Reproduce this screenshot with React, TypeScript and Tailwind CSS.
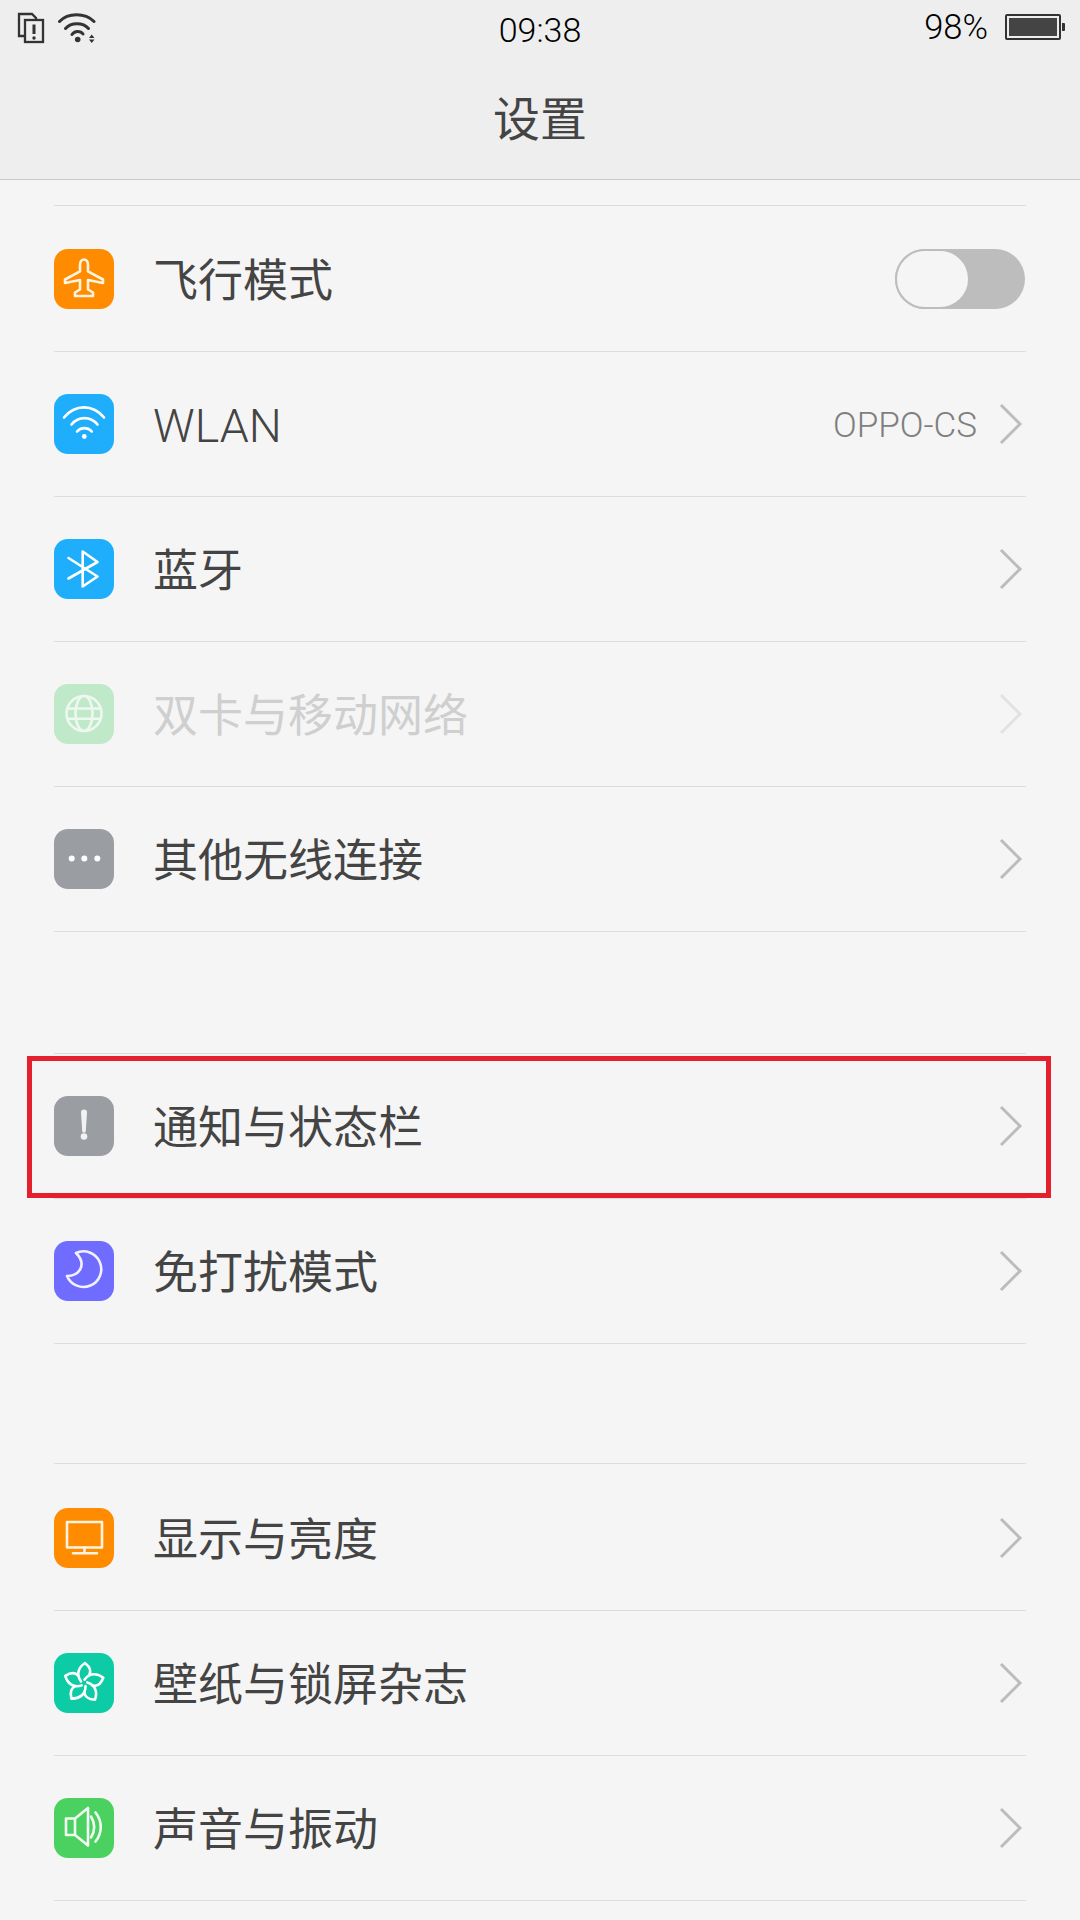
import React from "react";

const iconStroke = {
  fill: "none",
  stroke: "currentColor",
  strokeWidth: 2.6,
  strokeLinecap: "round" as const,
  strokeLinejoin: "round" as const,
};

const Glyph = ({ children }: { children: React.ReactNode }) => (
  <svg width="60" height="60" viewBox="0 0 60 60" {...iconStroke}>
    {children}
  </svg>
);

const PlaneIcon = () => (
  <Glyph>
    <path d="M30 10.500c-2.400 0-4 2.600-4 5.200v6.600L11 30.500V34l15-3v9.500l-5 3V47h18v-3.500l-5-3V31l15 3v-3.500l-15-8.200v-6.600c0-2.600-1.600-5.200-4-5.200z" />
  </Glyph>
);

const WifiIcon = () => (
  <Glyph>
    <path d="M10 23.500c11-13.500 29-13.500 40 0" />
    <path d="M17.500 30.500c7-8.500 19-8.500 26 0" />
    <path d="M23 37.500c3.800-4.500 11-4.500 14.800 0" />
    <circle cx="30.300" cy="42.500" r="2.400" fill="currentColor" stroke="none" />
  </Glyph>
);

const BluetoothIcon = () => (
  <Glyph>
    <path d="M14.500 19L43.500 37.500L28.700 47.500V12.500L43.500 23L14.500 39.500" />
  </Glyph>
);

const GlobeIcon = () => (
  <Glyph>
    <circle cx="30" cy="29.500" r="17.500" />
    <ellipse cx="30" cy="29.500" rx="8.500" ry="17.500" />
    <path d="M15 24.500H45M15 34.800H45" />
  </Glyph>
);

const DotsIcon = () => (
  <Glyph>
    <g fill="currentColor" stroke="none">
      <circle cx="17.700" cy="29.500" r="3" />
      <circle cx="30.300" cy="29.500" r="3" />
      <circle cx="43.300" cy="29.500" r="3" />
    </g>
  </Glyph>
);

const AlertIcon = () => (
  <Glyph>
    <g fill="currentColor" stroke="none">
      <path d="M27 16.500a3 3 0 0 1 6 0L31.800 35a1.800 1.800 0 0 1-3.600 0z" />
      <circle cx="30" cy="40.500" r="3.300" />
    </g>
  </Glyph>
);

const MoonIcon = () => (
  <Glyph>
    <path d="M22 12A17.800 17.800 0 1 1 13 35C26 35 33 23 22 12z" />
  </Glyph>
);

const MonitorIcon = () => (
  <Glyph>
    <rect x="13" y="14" width="35" height="25.500" />
    <path d="M30.500 39.500V45M19 45.200H43" />
  </Glyph>
);

const FlowerIcon = () => (
  <Glyph>
    {[0, 72, 144, 216, 288].map((angle) => (
      <path
        key={angle}
        transform={`rotate(${angle} 30 30)`}
        d="M27 28.500C21.500 21 25 14 31 10C36.500 14.500 37.500 18.500 35 22.500"
      />
    ))}
  </Glyph>
);

const SoundIcon = () => (
  <Glyph>
    <path d="M21 20.500H12V37H21M21 20.500L34 10V47.500L21 37V20.500z" />
    <path d="M37 18.500C41 25 41 33 37 39.500" />
    <path d="M41.500 14.500C48.500 23 48.500 35 41.500 43.500" />
  </Glyph>
);

const Chevron = ({ dim }: { dim?: boolean }) => (
  <svg
    width="24"
    height="42"
    viewBox="0 0 24 42"
    fill="none"
    stroke="currentColor"
    strokeWidth="3"
    className={dim ? "text-[#e2e2e2]" : "text-[#bcbcbc]"}
  >
    <path d="M2 2L21 21L2 40" />
  </svg>
);

type RowData = {
  label: string;
  icon: React.ReactNode;
  color: string;
  value?: string;
  disabled?: boolean;
  toggle?: boolean;
  latin?: boolean;
};

const networkRows: RowData[] = [
  { label: "飞行模式", icon: <PlaneIcon />, color: "bg-[#ff8c00] text-[#fff3e2]", toggle: true },
  { label: "WLAN", icon: <WifiIcon />, color: "bg-[#1eaefc] text-white", value: "OPPO-CS", latin: true },
  { label: "蓝牙", icon: <BluetoothIcon />, color: "bg-[#1eaefc] text-white" },
  { label: "双卡与移动网络", icon: <GlobeIcon />, color: "bg-[#bfe9c9] text-[#eef7f0]", disabled: true },
  { label: "其他无线连接", icon: <DotsIcon />, color: "bg-[#9a9da1] text-white" },
];

const noticeRows: RowData[] = [
  { label: "通知与状态栏", icon: <AlertIcon />, color: "bg-[#9a9da1] text-[#f2f2f2]" },
  { label: "免打扰模式", icon: <MoonIcon />, color: "bg-[#6f6cff] text-[#f2f2ff]" },
];

const displayRows: RowData[] = [
  { label: "显示与亮度", icon: <MonitorIcon />, color: "bg-[#ff8c00] text-[#fff3e2]" },
  { label: "壁纸与锁屏杂志", icon: <FlowerIcon />, color: "bg-[#0ccba5] text-white" },
  { label: "声音与振动", icon: <SoundIcon />, color: "bg-[#4bd160] text-[#f2fff4]" },
];

const Toggle = () => (
  <div className="mr-[1px] flex h-[60px] w-[130px] rounded-full bg-[#bdbdbd]">
    <div className="h-[60px] w-[75px] rounded-full border-2 border-[#bdbdbd] bg-[#f5f5f5]" />
  </div>
);

const Row = ({ row }: { row: RowData }) => (
  <div className="flex h-[145px] items-center border-b border-[#dcdcdc]">
    <div className={`flex h-[60px] w-[60px] items-center justify-center rounded-[14px] ${row.color}`}>
      {row.icon}
    </div>
    <span
      className={`ml-[39px] pt-[5px] ${row.latin ? "text-[46.5px] font-light" : "text-[45px] font-normal"} ${
        row.disabled ? "text-[#cfcfcf]" : "text-[#444444]"
      }`}
    >
      {row.label}
    </span>
    <div className="ml-auto flex items-center">
      {row.value && <span className="mr-[22px] pt-[5px] text-[35px] font-light text-[#7f7f7f]">{row.value}</span>}
      {row.toggle ? (
        <Toggle />
      ) : (
        <div className="mr-[3px] flex">
          <Chevron dim={row.disabled} />
        </div>
      )}
    </div>
  </div>
);

const SimIcon = () => (
  <svg width="28" height="32" viewBox="0 0 28 32" fill="none" stroke="#333" strokeWidth="2.300">
    <path d="M8 24H2V2H15L19 6V8" />
    <rect x="8" y="8" width="18" height="22" />
    <path d="M17 12.500V22" strokeWidth="3" />
    <circle cx="17" cy="26" r="1.700" fill="#333" stroke="none" />
  </svg>
);

const StatusWifi = () => (
  <svg width="38" height="31" viewBox="0 0 38 31" fill="none" stroke="#333" strokeWidth="3" strokeLinecap="round">
    <path d="M1.500 8.500C10 -0.500 27 -0.500 36 8.500" />
    <path d="M7.500 15.500C13 9 25 9 30.500 15.500" />
    <path d="M14 21.500C16.500 17.500 22.500 17.500 25 21" />
    <circle cx="19.700" cy="26.500" r="2.800" fill="#333" stroke="none" />
    <path d="M33.700 21.500L36.500 25H31zM33.700 30L36.500 26.500H31z" fill="#333" stroke="none" />
  </svg>
);

const Battery = () => (
  <div className="flex items-center">
    <div className="h-[26px] w-[56px] rounded-[2px] border-2 border-[#333] p-[2px]">
      <div className="h-full w-full bg-[#444]" />
    </div>
    <div className="ml-[1px] h-[8px] w-[3px] rounded-r-[1px] bg-[#333]" />
  </div>
);

export default function App() {
  return (
    <div
      className="relative h-[1920px] w-[1080px] overflow-hidden bg-[#f5f5f5]"
      style={{ fontFamily: 'Roboto, "Noto Sans CJK SC", sans-serif' }}
    >
      <header className="h-[180px] border-b border-[#c8c8c8] bg-[#eeeeee]">
        <div className="relative flex h-[58px] items-center pl-[17px] pr-[15px]">
          <div className="flex items-center gap-[13px] self-start pt-[12px]">
            <SimIcon />
            <StatusWifi />
          </div>
          <span className="absolute left-0 right-0 top-[11px] text-center text-[34px] font-light leading-[38px] text-black">
            09:38
          </span>
          <div className="ml-auto flex items-center self-start pt-[14px]">
            <span className="mr-[17px] text-[34.5px] font-light leading-[26px] text-black">98%</span>
            <Battery />
          </div>
        </div>
        <h1 className="pt-[2px] text-center text-[47px] font-normal leading-[120px] text-[#444444]">设置</h1>
      </header>

      <main className="mx-[54px]">
        <div className="mt-[25px] border-b border-[#dcdcdc]" />
        <div className="pt-[1px]">
          {networkRows.map((row) => (
            <Row key={row.label} row={row} />
          ))}
        </div>

        <div className="mt-[121px] border-b border-[#dcdcdc]" />
        {noticeRows.map((row) => (
          <Row key={row.label} row={row} />
        ))}

        <div className="mt-[119px] border-b border-[#dcdcdc]" />
        <div className="pt-[2px]">
          {displayRows.map((row) => (
            <Row key={row.label} row={row} />
          ))}
        </div>
      </main>

      {/* annotation box over the notification row */}
      <div className="absolute left-[27px] top-[1056px] h-[142px] w-[1024px] border-[5px] border-[#e5202e]" />
    </div>
  );
}
